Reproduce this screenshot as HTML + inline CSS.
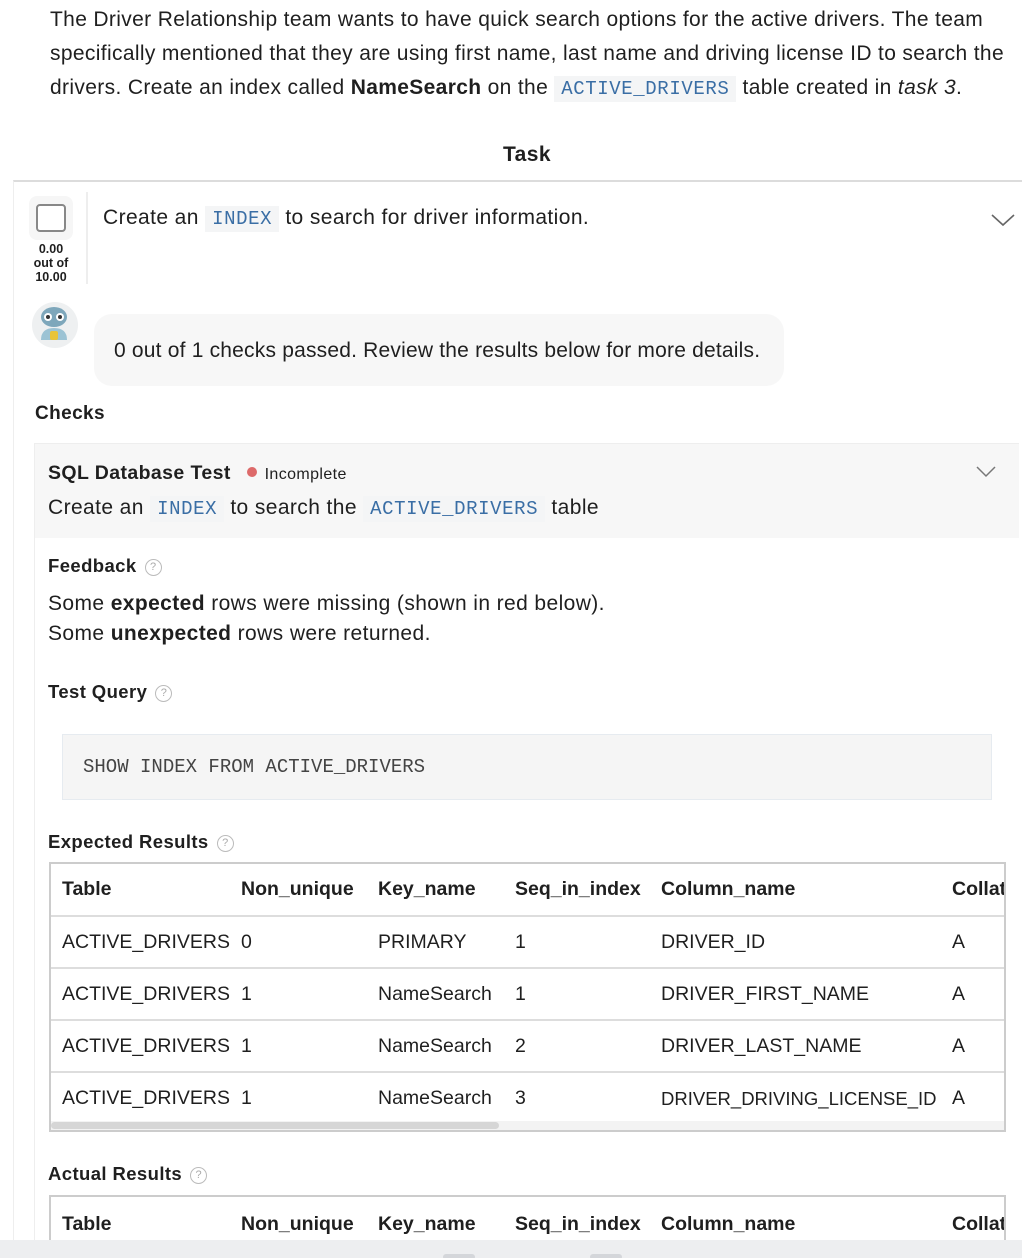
<!DOCTYPE html>
<html><head><meta charset="utf-8"><style>
*{margin:0;padding:0;box-sizing:border-box}
html,body{width:1022px;height:1258px;overflow:hidden}
body{background:#fff;font-family:"Liberation Sans",sans-serif;color:#1f1f1f;position:relative;letter-spacing:0.4px}
.a{position:absolute;white-space:nowrap}
.c{font-family:"Liberation Mono",monospace;color:#3a6ea5;background:#f4f5f6;padding:2px 7px;font-size:19px;letter-spacing:0.6px}
.t{font-size:21px}
.b{font-weight:bold}
.q{display:inline-block;width:17px;height:17px;border:1.5px solid #bbb;border-radius:50%;font-size:11px;color:#aaa;text-align:center;line-height:14px;font-weight:normal;vertical-align:2px;margin-left:8px;letter-spacing:0}
table{border-collapse:collapse;font-size:19.5px;table-layout:fixed;width:1010px;letter-spacing:0}
td{height:52px;padding:0 0 0 11px;border-top:2px solid #ddd;white-space:nowrap;overflow:hidden}
.tb{position:absolute;left:49px;width:957px;border:2px solid #ccc;overflow:hidden}
</style></head><body>
<div class="a" style="left:50px;top:3px;line-height:34px;font-size:21px;letter-spacing:0.35px">The Driver Relationship team wants to have quick search options for the active drivers. The team<br>specifically mentioned that they are using first name, last name and driving license ID to search the<br>drivers. Create an index called <b>NameSearch</b> on the <span class="c">ACTIVE_DRIVERS</span> table created in <i>task 3</i>.</div>
<div class="a b" style="left:503px;top:143px;font-size:21px">Task</div>
<div class="a" style="left:13px;top:180px;width:1009px;height:1078px;border-top:2px solid #dcdcdc;border-left:1px solid #eee"></div>
<div class="a" style="left:29px;top:196px;width:44px;height:44px;background:#f6f6f6;border-radius:8px"></div>
<div class="a" style="left:36px;top:204px;width:30px;height:28px;border:2px solid #888;border-radius:4px;background:#fff"></div>
<div class="a b" style="left:30px;top:242px;font-size:12.5px;line-height:14px;text-align:center;width:42px;letter-spacing:0">0.00<br>out of<br>10.00</div>
<div class="a" style="left:86px;top:192px;width:2px;height:92px;background:#eee"></div>
<div class="a t" style="left:103px;top:206px">Create an <span class="c">INDEX</span> to search for driver information.</div>
<svg class="a" style="left:990px;top:212px" width="26" height="16"><path d="M2 3 L13 13 L24 3" stroke="#666" stroke-width="1.6" fill="none"/></svg>
<svg class="a" style="left:32px;top:302px" width="46" height="46"><circle cx="23" cy="23" r="23" fill="#eef0f1"/><ellipse cx="22" cy="15" rx="13" ry="10" fill="#7ea7bb"/><circle cx="16" cy="15" r="4" fill="#fff"/><circle cx="28" cy="15" r="4" fill="#fff"/><circle cx="16" cy="15" r="2" fill="#333"/><circle cx="28" cy="15" r="2" fill="#333"/><path d="M9 38 Q9 26 22 26 Q35 26 35 38 Z" fill="#9cc3d4"/><rect x="18" y="29" width="8" height="9" rx="2" fill="#e8c43a"/></svg>
<div class="a" style="left:94px;top:314px;width:690px;height:72px;background:#f7f7f7;border-radius:18px"></div>
<div class="a t" style="left:114px;top:339px;letter-spacing:0.2px">0 out of 1 checks passed. Review the results below for more details.</div>
<div class="a b" style="left:35px;top:403px;font-size:19px">Checks</div>
<div class="a" style="left:34px;top:443px;width:985px;height:815px;border:1px solid #eee;border-right:none"></div>
<div class="a" style="left:35px;top:444px;width:984px;height:94px;background:#f7f7f7"></div>
<div class="a" style="left:48px;top:462px;font-size:19.5px"><b>SQL Database Test</b> <span style="display:inline-block;width:10px;height:10px;border-radius:50%;background:#dd6a6a;margin:0 8px 0 10px;vertical-align:2px"></span><span style="font-size:16px">Incomplete</span></div>
<svg class="a" style="left:975px;top:465px" width="22" height="14"><path d="M2 2 L11 11 L20 2" stroke="#777" stroke-width="1.5" fill="none"/></svg>
<div class="a t" style="left:48px;top:496px">Create an <span class="c">INDEX</span> to search the <span class="c">ACTIVE_DRIVERS</span> table</div>
<div class="a b" style="left:48px;top:555px;font-size:18.5px">Feedback<span class="q">?</span></div>
<div class="a t" style="left:48px;top:589px;line-height:30px">Some <b>expected</b> rows were missing (shown in red below).<br>Some <b>unexpected</b> rows were returned.</div>
<div class="a b" style="left:48px;top:681px;font-size:18.5px">Test Query<span class="q">?</span></div>
<div class="a" style="left:62px;top:734px;width:930px;height:66px;background:#f5f5f5;border:1px solid #e6ebf0"></div>
<div class="a" style="left:83px;top:756px;font-family:'Liberation Mono',monospace;font-size:19px;color:#444;letter-spacing:0">SHOW INDEX FROM ACTIVE_DRIVERS</div>
<div class="a b" style="left:48px;top:831px;font-size:18.5px">Expected Results<span class="q">?</span></div>
<div class="tb" style="top:862px;height:270px">
<table><colgroup><col style="width:179px"><col style="width:137px"><col style="width:137px"><col style="width:146px"><col style="width:291px"><col style="width:120px"></colgroup>
<tr style="font-weight:bold"><td style="border:none;height:51px">Table</td><td style="border:none">Non_unique</td><td style="border:none">Key_name</td><td style="border:none">Seq_in_index</td><td style="border:none">Column_name</td><td style="border:none">Collation</td></tr>
<tr><td>ACTIVE_DRIVERS</td><td>0</td><td>PRIMARY</td><td>1</td><td>DRIVER_ID</td><td>A</td></tr>
<tr><td>ACTIVE_DRIVERS</td><td>1</td><td>NameSearch</td><td>1</td><td>DRIVER_FIRST_NAME</td><td>A</td></tr>
<tr><td>ACTIVE_DRIVERS</td><td>1</td><td>NameSearch</td><td>2</td><td>DRIVER_LAST_NAME</td><td>A</td></tr>
<tr><td>ACTIVE_DRIVERS</td><td>1</td><td>NameSearch</td><td>3</td><td style="font-size:18.5px">DRIVER_DRIVING_LICENSE_ID</td><td>A</td></tr>
</table>
<div style="position:absolute;left:0;bottom:0;width:953px;height:9px;background:#f3f3f3"></div>
<div style="position:absolute;left:0;bottom:1px;width:448px;height:7px;background:#d6d6d6;border-radius:4px"></div>
</div>
<div class="a b" style="left:48px;top:1163px;font-size:18.5px">Actual Results<span class="q">?</span></div>
<div class="tb" style="top:1195px;height:70px">
<table><colgroup><col style="width:179px"><col style="width:137px"><col style="width:137px"><col style="width:146px"><col style="width:291px"><col style="width:120px"></colgroup>
<tr style="font-weight:bold"><td style="border:none;height:54px">Table</td><td style="border:none">Non_unique</td><td style="border:none">Key_name</td><td style="border:none">Seq_in_index</td><td style="border:none">Column_name</td><td style="border:none">Collation</td></tr></table></div>
<div class="a" style="left:0;top:1240px;width:1022px;height:18px;background:#edeef0;z-index:5"></div>
<div class="a" style="left:443px;top:1254px;width:32px;height:6px;background:#d4d6da;border-radius:3px;z-index:6"></div>
<div class="a" style="left:590px;top:1254px;width:32px;height:6px;background:#d4d6da;border-radius:3px;z-index:6"></div>
</body></html>
